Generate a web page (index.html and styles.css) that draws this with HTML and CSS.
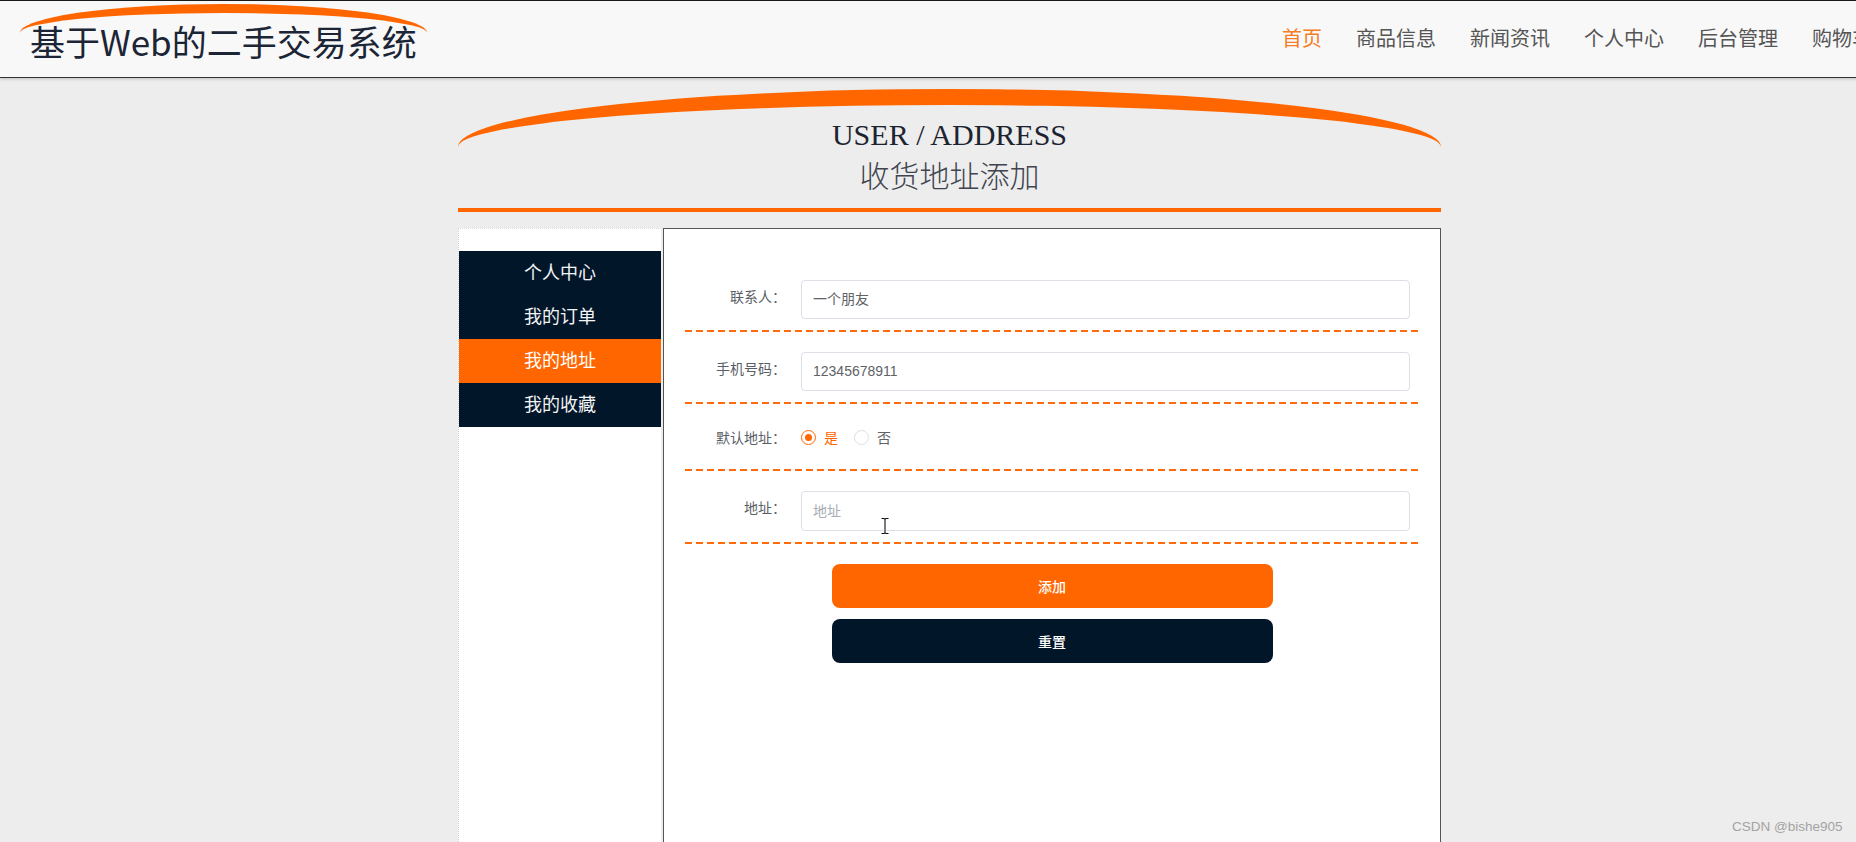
FILE: index.html
```html
<!DOCTYPE html>
<html lang="zh-CN">
<head>
<meta charset="utf-8">
<title>收货地址添加</title>
<link rel="stylesheet" href="styles.css">
</head>
<body>
<div class="page">
  <header class="topbar">
    <div class="logo">基于Web的二手交易系统</div>
    <nav class="nav">
      <a class="nav-item active">首页</a>
      <a class="nav-item">商品信息</a>
      <a class="nav-item">新闻资讯</a>
      <a class="nav-item">个人中心</a>
      <a class="nav-item">后台管理</a>
      <a class="nav-item">购物车</a>
    </nav>
  </header>

  <main class="wrap">
    <div class="heading">
      <div class="heading-en">USER / ADDRESS</div>
      <div class="heading-cn">收货地址添加</div>
    </div>
    <div class="heading-line"></div>

    <div class="content">
      <aside class="side">
        <ul class="menu">
          <li class="menu-item">个人中心</li>
          <li class="menu-item">我的订单</li>
          <li class="menu-item active">我的地址</li>
          <li class="menu-item">我的收藏</li>
        </ul>
      </aside>

      <section class="panel">
        <form class="form">
          <div class="row row-1">
            <label class="label">联系人：</label>
            <div class="input">一个朋友</div>
          </div>
          <div class="row row-2">
            <label class="label">手机号码：</label>
            <div class="input">12345678911</div>
          </div>
          <div class="row row-3">
            <label class="label">默认地址：</label>
            <div class="radios">
              <span class="radio checked"><span class="radio-dot"></span><span class="radio-text">是</span></span>
              <span class="radio"><span class="radio-dot"></span><span class="radio-text">否</span></span>
            </div>
          </div>
          <div class="row row-4">
            <label class="label">地址：</label>
            <div class="input input-tall placeholder">地址</div>
          </div>
          <div class="actions">
            <button type="button" class="btn btn-primary">添加</button>
            <button type="button" class="btn btn-dark">重置</button>
          </div>
        </form>
      </section>
    </div>
  </main>
</div>

<div class="watermark">CSDN @bishe905</div>
<svg class="cursor" width="10" height="18" viewBox="0 0 10 18">
  <path d="M1.5 1.5h2.2c.6 0 1.1.3 1.3.7.2-.4.7-.7 1.3-.7h2.2M5 2.5v13M1.5 16.5h2.2c.6 0 1.1-.3 1.3-.7.2.4.7.7 1.3.7h2.2" fill="none" stroke="#fff" stroke-width="2.6" stroke-linecap="round"/>
  <path d="M1.5 1.5h2.2c.6 0 1.1.3 1.3.7.2-.4.7-.7 1.3-.7h2.2M5 2.5v13M1.5 16.5h2.2c.6 0 1.1-.3 1.3-.7.2.4.7.7 1.3.7h2.2" fill="none" stroke="#111" stroke-width="1.1"/>
</svg>
</body>
</html>
```

FILE: styles.css
```css
html, body {
  margin: 0;
  padding: 0;
  overflow: hidden;
  background: #ededed;
}

body {
  font-family: "Liberation Sans", "Noto Sans CJK SC", sans-serif;
  position: relative;
  min-height: 842px;
}

.page {
  width: 1899px;
}

/* ---------- top bar ---------- */
.topbar {
  height: 78px;
  box-sizing: border-box;
  background: #f8f8f8;
  border-top: 1px solid #1a1a1a;
  border-bottom: 1px solid #333;
  box-shadow: 0 1px 3px rgba(0, 0, 0, 0.2);
  display: flex;
  align-items: flex-start;
}

.logo {
  margin: 3px 0 0 20px;
  width: 407px;
  height: 58px;
  box-sizing: border-box;
  border-top: 9px solid #ff6600;
  border-radius: 50%;
  padding: 6px 0 0 10px;
  font-family: "Noto Sans CJK SC", sans-serif;
  font-size: 35px;
  line-height: 44px;
  color: #1b2535;
  white-space: nowrap;
  flex-shrink: 0;
}

.nav {
  margin-left: auto;
  padding-right: 10px;
  align-self: stretch;
  display: flex;
  align-items: center;
  flex-shrink: 0;
}

.nav-item {
  padding: 0 17px 2px;
  font-family: "Noto Sans CJK SC", sans-serif;
  font-size: 20px;
  line-height: 28px;
  color: #555;
  white-space: nowrap;
}

.nav-item.active {
  color: #f57d24;
}

/* ---------- main ---------- */
.wrap {
  width: 983px;
  margin: 0 auto;
}

.heading {
  margin-top: 11px;
  height: 116px;
  box-sizing: border-box;
  border-top: 16px solid #ff6600;
  border-radius: 50%;
  text-align: center;
  padding-top: 12px;
}

.heading-en {
  font-family: "Liberation Serif", serif;
  font-size: 30px;
  line-height: 36px;
  color: #1c2430;
}

.heading-cn {
  margin-top: 3px;
  font-family: "Noto Sans CJK SC", sans-serif;
  font-weight: 300;
  font-size: 30px;
  line-height: 36px;
  color: #3f444e;
}

.heading-line {
  margin-top: 3px;
  height: 4px;
  background: #ff6600;
}

.content {
  margin-top: 16px;
  display: flex;
  align-items: flex-start;
}

.side {
  width: 203px;
  height: 620px;
  box-sizing: border-box;
  background: #fff;
  border-left: 1px dotted #cfcfcf;
  border-top: 1px dotted #dcdcdc;
  padding-top: 22px;
  flex-shrink: 0;
}

.menu {
  list-style: none;
  margin: 0;
  padding: 0;
  background: #02162a;
}

.menu-item {
  height: 44px;
  box-sizing: border-box;
  padding-bottom: 4px;
  line-height: 40px;
  text-align: center;
  font-family: "Noto Sans CJK SC", sans-serif;
  font-size: 18px;
  color: #f2f4f6;
}

.menu-item.active {
  background: #ff6600;
  color: #fff;
}

.panel {
  margin-left: 2px;
  width: 778px;
  height: 640px;
  box-sizing: border-box;
  background: #fff;
  border: 1px solid #555;
  border-bottom: 0;
  flex-shrink: 0;
}

.form {
  padding: 31px 21px 0;
}

.row {
  display: flex;
  align-items: flex-start;
  padding-bottom: 13px;
  background: repeating-linear-gradient(to right, #ff6a0a 0 7px, transparent 7px 11px) left bottom / 100% 2px no-repeat;
}

.row-1, .row-2 {
  padding-top: 20px;
}

.row-3 {
  padding-top: 17px;
  padding-bottom: 18px;
}

.row-4 {
  padding-top: 20px;
}

.label {
  width: 116px;
  box-sizing: border-box;
  padding-right: 15px;
  text-align: right;
  font-family: "Noto Sans CJK SC", sans-serif;
  font-size: 14px;
  line-height: 32px;
  color: #5a5e66;
  flex-shrink: 0;
}

.input {
  width: 609px;
  height: 39px;
  box-sizing: border-box;
  border: 1px solid #dcdfe6;
  border-radius: 4px;
  padding: 0 11px;
  font-size: 14px;
  line-height: 37px;
  color: #606266;
  background: #fff;
}

.input-tall {
  height: 40px;
  line-height: 38px;
}

.input.placeholder {
  color: #a8abb2;
}

.radios {
  height: 32px;
  display: flex;
  align-items: center;
}

.radio {
  display: flex;
  align-items: center;
  margin-right: 16px;
  font-family: "Noto Sans CJK SC", sans-serif;
  font-size: 14px;
  color: #606266;
}

.radio-dot {
  width: 15px;
  height: 15px;
  box-sizing: border-box;
  border: 1px solid #dcdfe6;
  border-radius: 50%;
  background: #fff;
  margin-right: 8px;
  display: flex;
  align-items: center;
  justify-content: center;
}

.radio.checked {
  color: #ff6600;
}

.radio.checked .radio-dot {
  border-color: #ff6600;
}

.radio.checked .radio-dot::after {
  content: "";
  width: 7px;
  height: 7px;
  border-radius: 50%;
  background: #ff6600;
}

.actions {
  padding-top: 20px;
  display: flex;
  flex-direction: column;
  align-items: center;
  gap: 11px;
}

.btn {
  width: 441px;
  height: 44px;
  border: 0;
  border-radius: 8px;
  font-family: "Noto Sans CJK SC", sans-serif;
  font-size: 14px;
  font-weight: 500;
  color: #fff;
  padding: 0;
}

.btn-primary {
  background: #ff6600;
}

.btn-dark {
  background: #02162a;
}

/* ---------- overlays ---------- */
.watermark {
  position: absolute;
  left: 1732px;
  top: 818px;
  font-family: "Liberation Sans", sans-serif;
  font-size: 13.5px;
  line-height: 18px;
  color: #a3a3a3;
}

.cursor {
  position: absolute;
  left: 880px;
  top: 517px;
}
```
